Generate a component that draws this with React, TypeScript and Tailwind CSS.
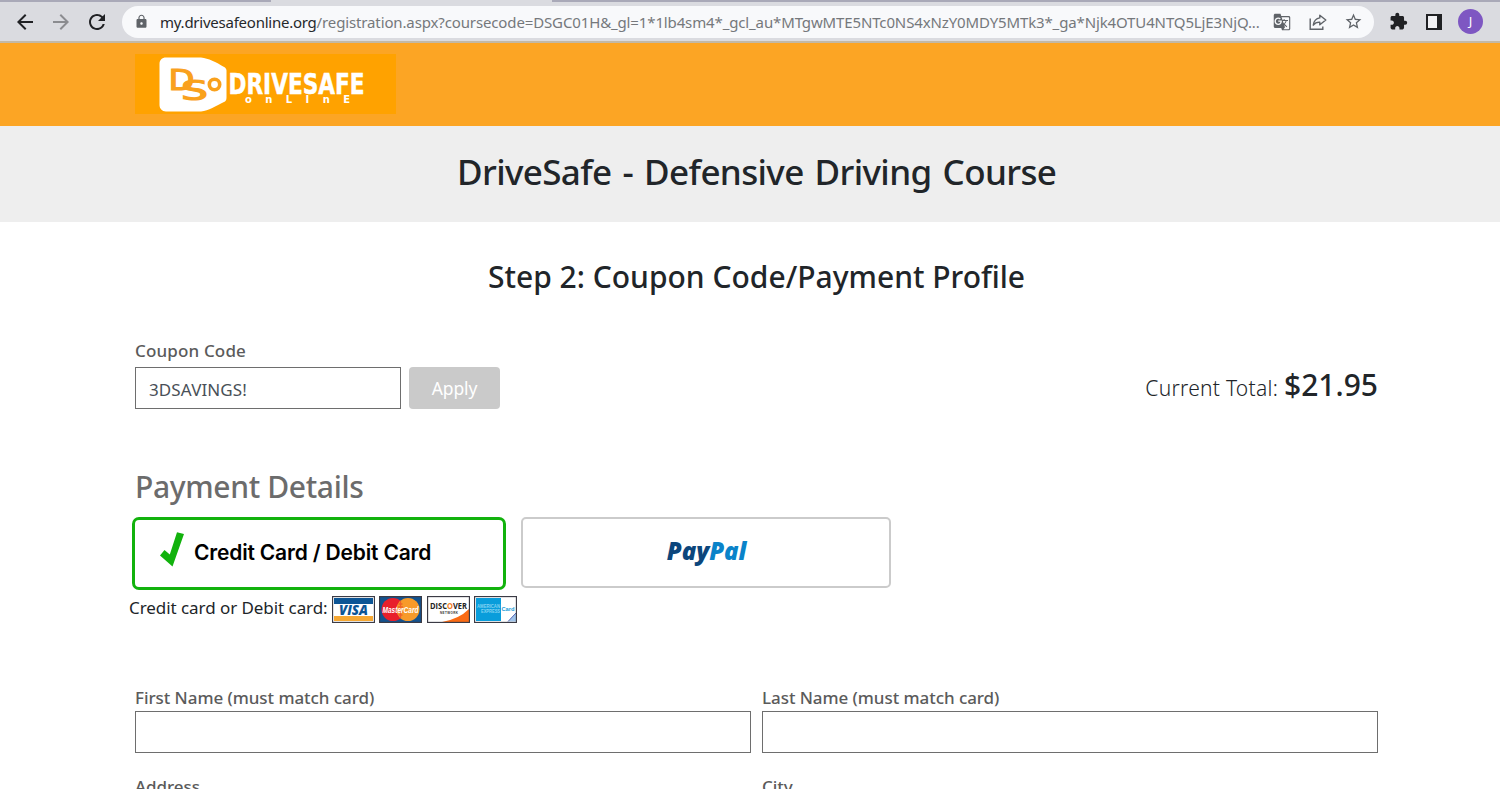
import type { ReactNode } from "react";
import { MdArrowBack, MdArrowForward, MdExtension, MdGTranslate, MdLock, MdRefresh, MdStarBorder } from "react-icons/md";

function BrowserBar() {
  return (
    <div className="flex h-[43px] flex-col border-b-2 border-[#c3b9a6] bg-[#dadbe0]">
      <div className="flex h-[2px] shrink-0">
        <div className="w-[271px] bg-[#a9a9b8]" />
        <div className="w-[281px] bg-[#dadbe0]" />
        <div className="flex-1 bg-[#a9a9b8]" />
      </div>
      <div className="flex h-[39px] items-center">
        <MdArrowBack className="ml-[13px] size-[24px] shrink-0 text-[#202124]" />
        <MdArrowForward className="ml-[12px] size-[24px] shrink-0 text-[#8b8c90]" />
        <MdRefresh className="ml-[12px] size-[24px] shrink-0 text-[#202124]" />
        <div className="ml-[13px] flex h-[32px] w-[1252px] items-center rounded-full bg-[#f8f9fb]">
          <MdLock className="ml-[12px] size-[15px] shrink-0 text-[#5f6368]" />
          <div className="ml-[11px] w-[1112px] shrink-0 text-[15px] leading-5 whitespace-nowrap text-[#75787c]">
            <span className="tracking-[-0.24px] text-[#26282b]">my.drivesafeonline.org</span>
            <span className="tracking-[-0.13px]">/registration.aspx?coursecode=DSGC01H&amp;_gl=1*1lb4sm4*_gcl_au*MTgwMTE5NTc0NS4xNzY0MDY5MTk3*_ga*Njk4OTU4NTQ5LjE3NjQ...</span>
          </div>
          <MdGTranslate className="ml-px size-[18px] shrink-0 text-[#5f6368]" />
          <svg viewBox="0 0 18 18" className="ml-[18px] size-[18px] shrink-0 fill-none stroke-[#5f6368] stroke-[1.4]">
            <path d="M1.2 5.5v10.8h12.6v-2.8" />
            <path d="M10.8 2.2 16.8 7l-6 4.8V9.1C7.800 9 5.800 10 4.300 12.200 4.800 8.200 7 5.400 10.800 4.900z" strokeLinejoin="round" />
          </svg>
          <MdStarBorder className="ml-[17px] size-[19px] shrink-0 text-[#5f6368]" />
        </div>
        <MdExtension className="ml-[15px] size-[19px] shrink-0 text-[#202124]" />
        <div className="ml-[18px] h-[16px] w-[16px] border-2 border-r-[5px] border-[#202124] bg-[#f1f1f4]" />
        <div className="ml-[16px] flex size-[25px] items-center justify-center rounded-full bg-[#7e57c2] text-[13px] text-white">J</div>
      </div>
    </div>
  );
}

function Logo() {
  return (
    <svg viewBox="0 0 261 60" className="h-[60px] w-[261px] bg-[#ffa200]">
      <path d="M31 3.500h35c8 1 14 4 24 10 1 1 1.500 2 1.500 3v27c0 2-.5 3-1.500 4-10 5-16 9-24 10H31c-4 0-6.500-3-6.500-6.500V10c0-4 2.500-6.500 6.500-6.500z" fill="#fff" />
      <g className="font-['DejaVu_Sans']" fill="#f9a11d" stroke="#f9a11d" strokeWidth="1.200">
        <text x="33.500" y="36" fontSize="28" textLength="26" lengthAdjust="spacingAndGlyphs">D</text>
        <text x="46" y="45.500" fontSize="26" textLength="27" lengthAdjust="spacingAndGlyphs">S</text>
        <circle cx="79.500" cy="30.500" r="5.200" fill="none" strokeWidth="3.600" />
      </g>
      <g className="font-['DejaVu_Sans'] font-bold" fill="#fff">
        <text x="93.500" y="39.500" fontSize="28" textLength="136" lengthAdjust="spacingAndGlyphs" stroke="#fff" strokeWidth="0.500">DRIVESAFE</text>
        <text x="110" y="49" fontSize="10" textLength="105">onLInE</text>
      </g>
    </svg>
  );
}

function CardFrame({ children }: { children: ReactNode }) {
  return (
    <svg viewBox="0 0 43 27" className="h-[27px] w-[43px]">
      <rect width="43" height="27" fill="#fff" />
      {children}
      <rect x="0.5" y="0.5" width="42" height="26" fill="none" stroke="#3b3b45" strokeWidth="1.3" />
    </svg>
  );
}

function CardLogos() {
  return (
    <div className="flex gap-[4.3px]">
      <CardFrame>
        <rect x="2" y="2" width="39" height="6" fill="#0c5595" />
        <rect x="2" y="20" width="39" height="5" fill="#f6a833" />
        <text x="7" y="18.500" fontSize="14" textLength="29" lengthAdjust="spacingAndGlyphs" className="fill-[#0c5595] font-['Open_Sans'] font-extrabold italic">VISA</text>
      </CardFrame>
      <CardFrame>
        <rect width="43" height="27" fill="#14528d" />
        <circle cx="14" cy="13.500" r="11.500" fill="#e8202b" />
        <circle cx="29" cy="13.500" r="11.500" fill="#f79a2a" />
        <path d="M21.500 4.800v17.400M19.500 8h4M19 11h5M19 16h5M19.500 19h4" stroke="#ee6328" strokeWidth="1.300" />
        <text x="3.500" y="17" fontSize="9" textLength="36" lengthAdjust="spacingAndGlyphs" className="fill-white font-['Liberation_Sans'] font-bold italic">MasterCard</text>
      </CardFrame>
      <CardFrame>
        <path d="M15 26Q32 23 42 13v13z" fill="#fa6b14" />
        <text x="3" y="13" fontSize="9.500" textLength="37" lengthAdjust="spacingAndGlyphs" className="fill-[#222] font-['Open_Sans'] font-bold">DISC<tspan fill="#f47b20">O</tspan>VER</text>
        <text x="13" y="17.500" fontSize="3" textLength="18" className="fill-[#333] font-['Liberation_Sans'] font-bold">NETWORK</text>
      </CardFrame>
      <CardFrame>
        <rect x="2" y="2" width="25" height="23" fill="#099ddb" />
        <g className="font-['Liberation_Sans'] font-bold">
          <text x="3" y="12" fontSize="5" textLength="23" lengthAdjust="spacingAndGlyphs" fill="#83d3f2">AMERICAN</text>
          <text x="7" y="17" fontSize="5" textLength="19" lengthAdjust="spacingAndGlyphs" fill="#83d3f2">EXPRESS</text>
          <text x="27.500" y="15" fontSize="5.500" textLength="13" lengthAdjust="spacingAndGlyphs" fill="#169cd8">Card</text>
        </g>
        <path d="M34 25.500 42 17v8.500z" fill="#9fc3ea" />
        <path d="M34 25.500 42 17" stroke="#5565b5" />
      </CardFrame>
    </div>
  );
}

function Field({ label }: { label: string }) {
  return (
    <label className="block">
      <span className="block h-[24px] text-[17px] leading-6 font-medium tracking-[-0.06px] whitespace-nowrap text-[#5b5b5b]">{label}</span>
      <span className="mt-px block h-[42px] border border-[#6e6e6e] bg-white" />
    </label>
  );
}

export default function App() {
  return (
    <div className="h-[789px] w-[1500px] overflow-hidden bg-white font-['Noto_Sans',sans-serif] text-[#212529]">
      <BrowserBar />

      <header className="h-[83px] bg-[#fca524] pt-[11px] pl-[135px]">
        <Logo />
      </header>

      <div className="h-[96px] bg-[#eeeeee] pt-[21px] pl-[457px]">
        <h1 className="text-[35px] leading-[49px] font-medium tracking-[-0.63px] whitespace-nowrap [word-spacing:2.500px]">DriveSafe - Defensive Driving Course</h1>
      </div>

      <main className="pt-[32px] pl-[135px]">
        <h2 className="pl-[353px] text-[30px] leading-[45px] font-medium whitespace-nowrap">Step 2: Coupon Code/Payment Profile</h2>

        <div className="mt-[39px] flex w-[1243px] justify-between">
          <div>
            <div className="h-[29px] text-[17px] leading-[25px] font-medium tracking-[0.15px] text-[#5b5b5b]">Coupon Code</div>
            <div className="flex gap-[8px]">
              <div className="flex h-[42px] w-[266px] items-center border border-[#6e6e6e] pt-[3px] pl-[13px] text-[17px] tracking-[0.12px] text-[#495057]">3DSAVINGS!</div>
              <button className="h-[42px] w-[91px] rounded-[4px] bg-[#cacaca] pt-px text-[17.5px] tracking-[-0.1px] text-white">Apply</button>
            </div>
          </div>
          <div className="flex items-baseline gap-[6px] pt-[24px] whitespace-nowrap">
            <span className="text-[21px] font-light tracking-[0.27px]">Current Total:</span>
            <span className="text-[30px] leading-[45px] font-medium">$21.95</span>
          </div>
        </div>

        <h3 className="mt-[56px] text-[30px] leading-[44px] font-medium tracking-[-0.35px] text-[#6c6c6c]">Payment Details</h3>

        <div className="mt-[8px] -ml-[3px] flex gap-[14.5px]">
          <div className="flex h-[73px] w-[374px] rounded-[7px] border-[3px] border-[#12b20d] pl-[24px]">
            <svg viewBox="0 0 26 36" className="mt-[11px] h-[36px] w-[26px]">
              <path d="M1 24.500 5.500 19l5.300 4.500L18 1.200 25 3 13.500 35.500z" fill="#12b20d" />
            </svg>
            <span className="mt-[17px] ml-[9px] font-['Inter'] text-[21px] leading-[31px] font-semibold tracking-[-0.18px] whitespace-nowrap text-black">Credit Card / Debit Card</span>
          </div>
          <div className="flex h-[71px] w-[370px] justify-center rounded-[5px] border-2 border-[#cbcbcb] pt-[16px] pl-[2px]">
            <span className="font-['Open_Sans'] text-[24px] leading-[32px] font-extrabold tracking-[-0.1px] text-[#0a83c9] italic"><span className="text-[#0c467c]">Pay</span>Pal</span>
          </div>
        </div>

        <div className="mt-[6px] -ml-[6px] flex h-[27px] items-start">
          <span className="w-[203px] text-[17px] leading-[24px] tracking-[-0.06px] whitespace-nowrap">Credit card or Debit card:</span>
          <CardLogos />
        </div>

        <div className="mt-[63px] grid w-[1243px] grid-cols-2 gap-x-[11px] gap-y-[22px]">
          <Field label="First Name (must match card)" />
          <Field label="Last Name (must match card)" />
          <Field label="Address" />
          <Field label="City" />
        </div>
      </main>
    </div>
  );
}
